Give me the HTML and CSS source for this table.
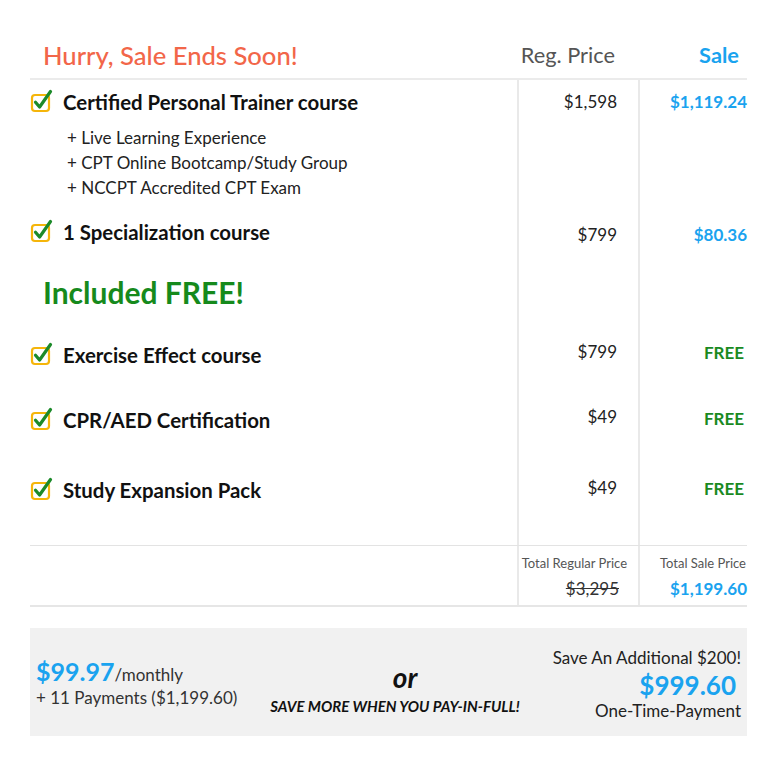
FILE: index.html
```html
<!DOCTYPE html>
<html>
<head>
<meta charset="utf-8">
<link rel="stylesheet" href="styles.css">
</head>
<body>
<div class="wrap">
  <div class="row head">
    <div class="c1"><span class="hurry">Hurry, Sale Ends Soon!</span></div>
    <div class="c2"><span class="reg-h">Reg. Price</span></div>
    <div class="c3"><span class="sale-h">Sale</span></div>
  </div>

  <div class="row r1">
    <div class="c1 line">
      <div class="item">
        <svg class="chk" viewBox="0 0 24 24" width="24" height="24"><rect x="2" y="6" width="17" height="16" rx="3" fill="none" stroke="#f5b50a" stroke-width="2.2"/><path d="M5.5 13.2 L9.6 18 L20.5 2.5" fill="none" stroke="#1c8a2a" stroke-width="3.2" stroke-linecap="round" stroke-linejoin="round"/></svg>
        <span class="title">Certified Personal Trainer course</span>
      </div>
      <ul class="subs">
        <li>+ Live Learning Experience</li>
        <li>+ CPT Online Bootcamp/Study Group</li>
        <li>+ NCCPT Accredited CPT Exam</li>
      </ul>
    </div>
    <div class="c2 line"><span class="reg">$1,598</span></div>
    <div class="c3 line"><span class="sale">$1,119.24</span></div>
  </div>

  <div class="row r2">
    <div class="c1 line">
      <div class="item">
        <svg class="chk" viewBox="0 0 24 24" width="24" height="24"><rect x="2" y="6" width="17" height="16" rx="3" fill="none" stroke="#f5b50a" stroke-width="2.2"/><path d="M5.5 13.2 L9.6 18 L20.5 2.5" fill="none" stroke="#1c8a2a" stroke-width="3.2" stroke-linecap="round" stroke-linejoin="round"/></svg>
        <span class="title">1 Specialization course</span>
      </div>
    </div>
    <div class="c2 line"><span class="reg">$799</span></div>
    <div class="c3 line"><span class="sale">$80.36</span></div>
  </div>

  <div class="row r3">
    <div class="c1 line"><span class="free-h">Included FREE!</span></div>
    <div class="c2 line"></div>
    <div class="c3 line"></div>
  </div>

  <div class="row r4">
    <div class="c1 line">
      <div class="item">
        <svg class="chk" viewBox="0 0 24 24" width="24" height="24"><rect x="2" y="6" width="17" height="16" rx="3" fill="none" stroke="#f5b50a" stroke-width="2.2"/><path d="M5.5 13.2 L9.6 18 L20.5 2.5" fill="none" stroke="#1c8a2a" stroke-width="3.2" stroke-linecap="round" stroke-linejoin="round"/></svg>
        <span class="title">Exercise Effect course</span>
      </div>
    </div>
    <div class="c2 line"><span class="reg">$799</span></div>
    <div class="c3 line"><span class="free">FREE</span></div>
  </div>

  <div class="row r5">
    <div class="c1 line">
      <div class="item">
        <svg class="chk" viewBox="0 0 24 24" width="24" height="24"><rect x="2" y="6" width="17" height="16" rx="3" fill="none" stroke="#f5b50a" stroke-width="2.2"/><path d="M5.5 13.2 L9.6 18 L20.5 2.5" fill="none" stroke="#1c8a2a" stroke-width="3.2" stroke-linecap="round" stroke-linejoin="round"/></svg>
        <span class="title">CPR/AED Certification</span>
      </div>
    </div>
    <div class="c2 line"><span class="reg">$49</span></div>
    <div class="c3 line"><span class="free">FREE</span></div>
  </div>

  <div class="row r6">
    <div class="c1 line">
      <div class="item">
        <svg class="chk" viewBox="0 0 24 24" width="24" height="24"><rect x="2" y="6" width="17" height="16" rx="3" fill="none" stroke="#f5b50a" stroke-width="2.2"/><path d="M5.5 13.2 L9.6 18 L20.5 2.5" fill="none" stroke="#1c8a2a" stroke-width="3.2" stroke-linecap="round" stroke-linejoin="round"/></svg>
        <span class="title">Study Expansion Pack</span>
      </div>
    </div>
    <div class="c2 line"><span class="reg">$49</span></div>
    <div class="c3 line"><span class="free">FREE</span></div>
  </div>

  <div class="row totals">
    <div class="c1 tline"></div>
    <div class="c2 tline">
      <div class="tlabel">Total Regular Price</div>
      <div class="tstrike">$3,295</div>
    </div>
    <div class="c3 tline">
      <div class="tlabel">Total Sale Price</div>
      <div class="tsale">$1,199.60</div>
    </div>
  </div>

  <div class="pay">
    <div class="monthly">
      <div class="m1"><span class="mprice">$99.97</span><span class="mper">/monthly</span></div>
      <div class="m2">+ 11 Payments ($1,199.60)</div>
    </div>
    <div class="or-box">
      <div class="or">or</div>
      <div class="savemore">SAVE MORE WHEN YOU PAY-IN-FULL!</div>
    </div>
    <div class="full">
      <div class="f1">Save An Additional $200!</div>
      <div class="f2">$999.60</div>
      <div class="f3">One-Time-Payment</div>
    </div>
  </div>
</div>
</body>
</html>
```

FILE: styles.css
```css
* { box-sizing: border-box; }
body {
  margin: 0;
  background: #fff;
  font-family: Lato, "Open Sans", sans-serif;
  color: #1a1a1a;
}
.wrap {
  margin-left: 30px;
  width: 717px;
}
.row {
  display: grid;
  grid-template-columns: 487px 121px 107px;
}
.head {
  height: 80px;
  border-bottom: 2px solid #ebebeb;
  align-items: start;
}
.head .c1, .head .c2, .head .c3 { padding-top: 40px; line-height: 30px; }
.hurry {
  padding-left: 13px;
  color: #f26649;
  font-size: 25.6px;
  font-weight: 500;
}
.head .c2 { text-align: right; padding-right: 23px; }
.reg-h { color: #555; font-size: 21.8px; }
.head .c3 { text-align: right; padding-right: 6px; }
.sale-h { color: #1aa3ef; font-size: 21.8px; font-weight: 700; }

.c2.line, .c3.line, .c2.tline, .c3.tline { border-left: 2px solid #e9e9e9; }
.c2.line { text-align: right; padding-right: 21px; }
.c3.line, .c3.tline { text-align: right; padding-right: 0; margin-right: -2px; }

.item {
  display: flex;
  align-items: center;
  gap: 9px;
  line-height: 24px;
}
.chk { flex: none; margin-top: -3px; }
.title { font-size: 20.4px; font-weight: 700; color: #111; }
.reg { font-size: 17px; line-height: 24px; color: #222; }
.sale { font-size: 17px; line-height: 24px; font-weight: 700; color: #1aa3ef; }
.free { font-size: 17px; line-height: 24px; font-weight: 700; color: #1a8a1f; margin-right: 3px; }

.subs {
  list-style: none;
  margin: 11px 0 0;
  padding: 0 0 0 37px;
  font-size: 17px;
  line-height: 25px;
  color: #222;
}

.r1 { height: 130px; }
.r1 .c1, .r1 .c2, .r1 .c3 { padding-top: 10px; }

.r2 { height: 48px; }
.r2 .c1 { padding-top: 10px; }
.r2 .c2, .r2 .c3 { padding-top: 13px; }

.r3 { height: 62px; }
.r3 .c1 { padding-top: 17px; padding-left: 13px; }
.free-h { font-size: 30px; line-height: 34px; font-weight: 700; color: #168a1c; }

.r4 { height: 68px; }
.r4 .c1 { padding-top: 23px; }
.r4 .c2 { padding-top: 20px; }
.r4 .c3 { padding-top: 21px; }

.r5 { height: 67px; }
.r5 .c1 { padding-top: 20px; }
.r5 .c2 { padding-top: 17px; }
.r5 .c3 { padding-top: 19px; }

.r6 { height: 90px; }
.r6 .c1 { padding-top: 23px; }
.r6 .c2 { padding-top: 21px; }
.r6 .c3 { padding-top: 22px; }

.totals {
  height: 62px;
  border-top: 1px solid #e3e3e3;
  border-bottom: 2px solid #e6e6e6;
}
.totals .c2 { padding-top: 8px; text-align: right; }
.totals .c2 .tlabel { padding-right: 11px; }
.totals .c2 .tstrike { padding-right: 19px; }
.totals .c3 { padding-top: 8px; text-align: right; }
.tlabel { font-size: 13px; line-height: 18px; color: #555; }
.totals .c3 .tlabel { padding-right: 1px; }
.tstrike { font-size: 17px; line-height: 22px; margin-top: 6px; text-decoration: line-through; color: #333; }
.tsale { font-size: 17px; line-height: 22px; margin-top: 6px; font-weight: 700; color: #1aa3ef; }

.pay {
  margin-top: 21px;
  background: #f1f1f1;
  height: 108px;
  display: flex;
  justify-content: space-between;
  align-items: flex-start;
  padding: 0 6px;
}
.monthly { padding-top: 30px; }
.m1 { line-height: 26px; }
.mprice { font-size: 25px; font-weight: 700; color: #1aa3ef; }
.mper { font-size: 17px; color: #333; }
.m2 { font-size: 17px; line-height: 20px; color: #333; }
.or-box { padding-top: 33px; text-align: center; }
.or { font-size: 28px; font-weight: 700; font-style: italic; line-height: 32px; padding-left: 20px; color: #111; }
.savemore { font-size: 15px; font-weight: 700; font-style: italic; line-height: 20px; margin-top: 3px; color: #111; }
.full { padding-top: 19px; text-align: right; }
.f1 { font-size: 17px; line-height: 22px; color: #222; }
.f2 { font-size: 26px; font-weight: 700; color: #1aa3ef; line-height: 32px; padding-right: 5px; }
.f3 { font-size: 17px; line-height: 20px; color: #222; }
```
